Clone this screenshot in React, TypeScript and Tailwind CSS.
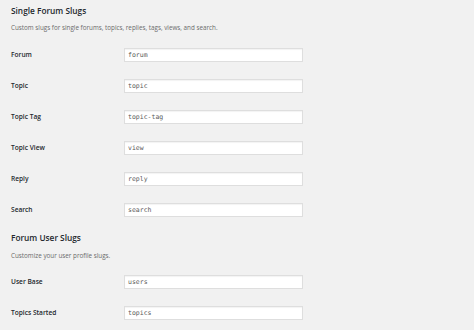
const sections = [
  {
    title: 'Single Forum Slugs',
    desc: 'Custom slugs for single forums, topics, replies, tags, views, and search.',
    rows: [
      ['Forum', 'forum'],
      ['Topic', 'topic'],
      ['Topic Tag', 'topic-tag'],
      ['Topic View', 'view'],
      ['Reply', 'reply'],
      ['Search', 'search'],
    ],
  },
  {
    title: 'Forum User Slugs',
    desc: 'Customize your user profile slugs.',
    rows: [
      ['User Base', 'users'],
      ['Topics Started', 'topics'],
    ],
  },
];

export default function App() {
  return (
    <div
      className="w-[474px] h-[330px] overflow-hidden bg-[#f1f1f1] px-[11px] pt-[3px] text-[#23282d]"
      style={{ fontFamily: '"Open Sans", "Noto Sans", sans-serif' }}
    >
      {sections.map((s, i) => (
        <section key={s.title} className={i > 0 ? 'mt-[5px]' : ''}>
          {/* section heading */}
          <h2 className="text-[8.3px] leading-[16px] font-semibold">{s.title}</h2>
          <p className={`text-[6.3px] leading-[12px] text-[#6b6b6b] ${i > 0 ? 'mt-[4px]' : 'mt-[3px]'}`}>{s.desc}</p>

          <div className={i > 0 ? 'mt-[4px]' : 'mt-[5px]'}>
            {s.rows.map(([label, value]) => (
              <div key={label} className="h-[31px] flex items-center">
                <label className="w-[113px] text-[6.6px] font-semibold">{label}</label>
                <input
                  readOnly
                  value={value}
                  className="w-[179px] h-[14px] bg-white border border-[#dedede] shadow-[inset_0_1px_1px_rgba(0,0,0,0.05)] px-[3px] text-[6.5px] text-[#5a5a5a] outline-none"
                  style={{ fontFamily: '"DejaVu Sans Mono", monospace' }}
                />
              </div>
            ))}
          </div>
        </section>
      ))}
    </div>
  );
}
